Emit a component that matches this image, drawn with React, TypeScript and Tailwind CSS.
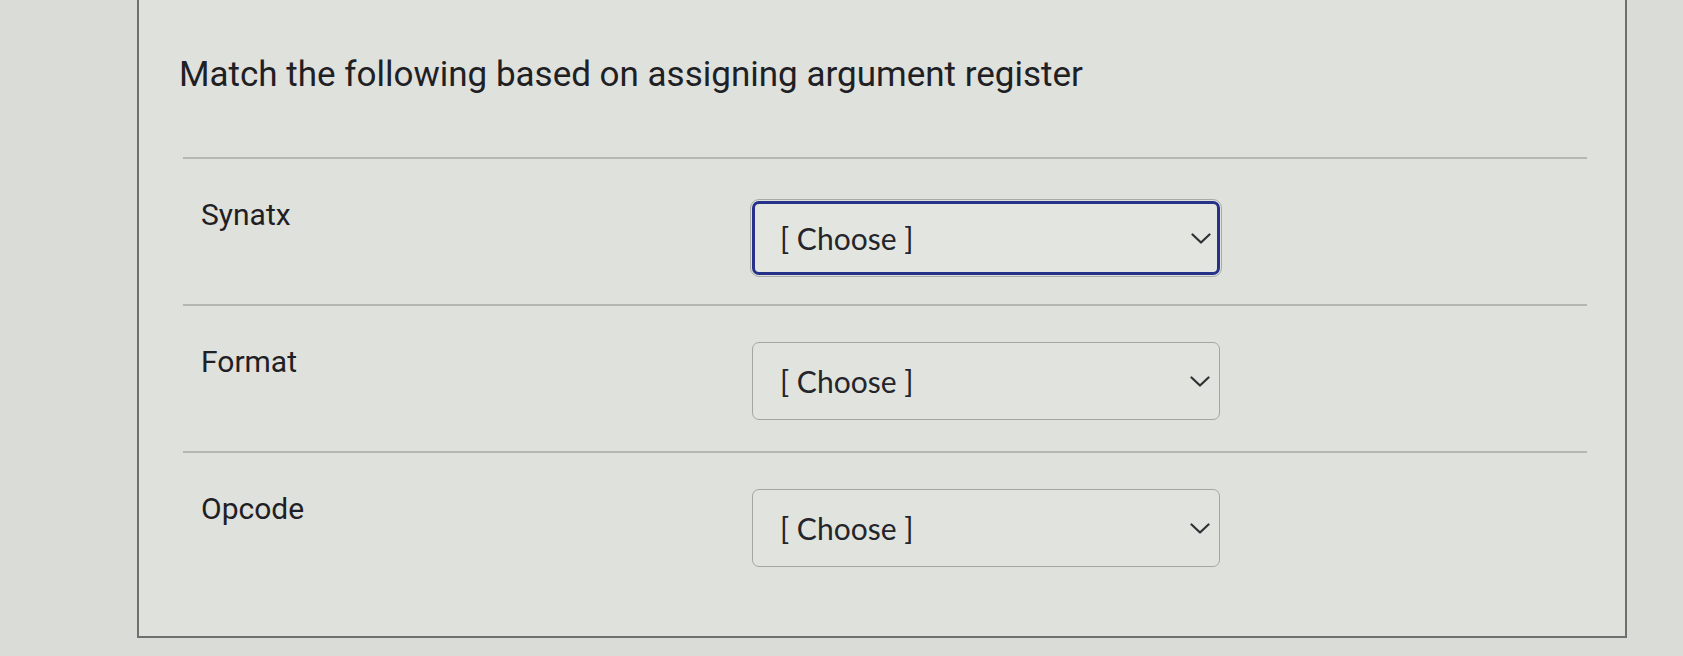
import React, { useState } from 'react';

const rows = [
  { label: 'Synatx' },
  { label: 'Format' },
  { label: 'Opcode' },
];

const Chevron = () => (
  <svg width="20" height="11" viewBox="0 0 20 11" fill="none" className="shrink-0">
    <path d="M1.5 1.5 L10 9.5 L18.5 1.5" stroke="#2e3034" strokeWidth="2.2" strokeLinecap="round" strokeLinejoin="round" />
  </svg>
);

const ChooseBox = ({ focused }: { focused: boolean }) => (
  <div
    className={
      focused
        ? 'flex items-center justify-between w-[468px] h-[74px] rounded-[7px] border-[3px] border-[#26318a] outline outline-1 outline-offset-[1px] outline-[#a9aba6] bg-[#e3e5e0] pl-[25px] pr-[6px]'
        : 'flex items-center justify-between w-[468px] h-[78px] rounded-[7px] border border-[#a4a6a2] bg-[#e1e3de] pl-[27px] pr-[9px]'
    }
  >
    <span className="text-[30px] text-[#24252a]" style={{ fontFamily: 'Lato, "Open Sans", sans-serif' }}>
      [ Choose ]
    </span>
    <Chevron />
  </div>
);

export default function App() {
  const [active] = useState(0);

  return (
    <div className="h-[656px] overflow-hidden bg-[#dadcd7] pl-[137px]" style={{ fontFamily: 'Roboto, "Liberation Sans", sans-serif' }}>
      <div className="w-[1490px] h-[638px] border-x-2 border-b-2 border-[#6e706d] bg-[#dfe1dc] pl-[40px]">
        <h1 className="pt-[55px] text-[35px] leading-[40px] text-[#1f2024]">
          Match the following based on assigning argument register
        </h1>

        <div className="mt-[62px] ml-[4px] mr-[38px]">
          {rows.map((row, i) => (
            <div key={row.label} className={'flex border-t-2 border-[#b5b7b2] ' + (i < 2 ? 'h-[147px]' : 'h-[180px]')}>
              <div className="w-[569px] shrink-0 pl-[18px] pt-[38px] text-[30px] leading-[36px] text-[#1f2024]">
                {row.label}
              </div>
              <div className={i === 0 ? 'pt-[42px]' : 'pt-[36px]'}>
                <ChooseBox focused={i === active} />
              </div>
            </div>
          ))}
        </div>
      </div>
    </div>
  );
}
